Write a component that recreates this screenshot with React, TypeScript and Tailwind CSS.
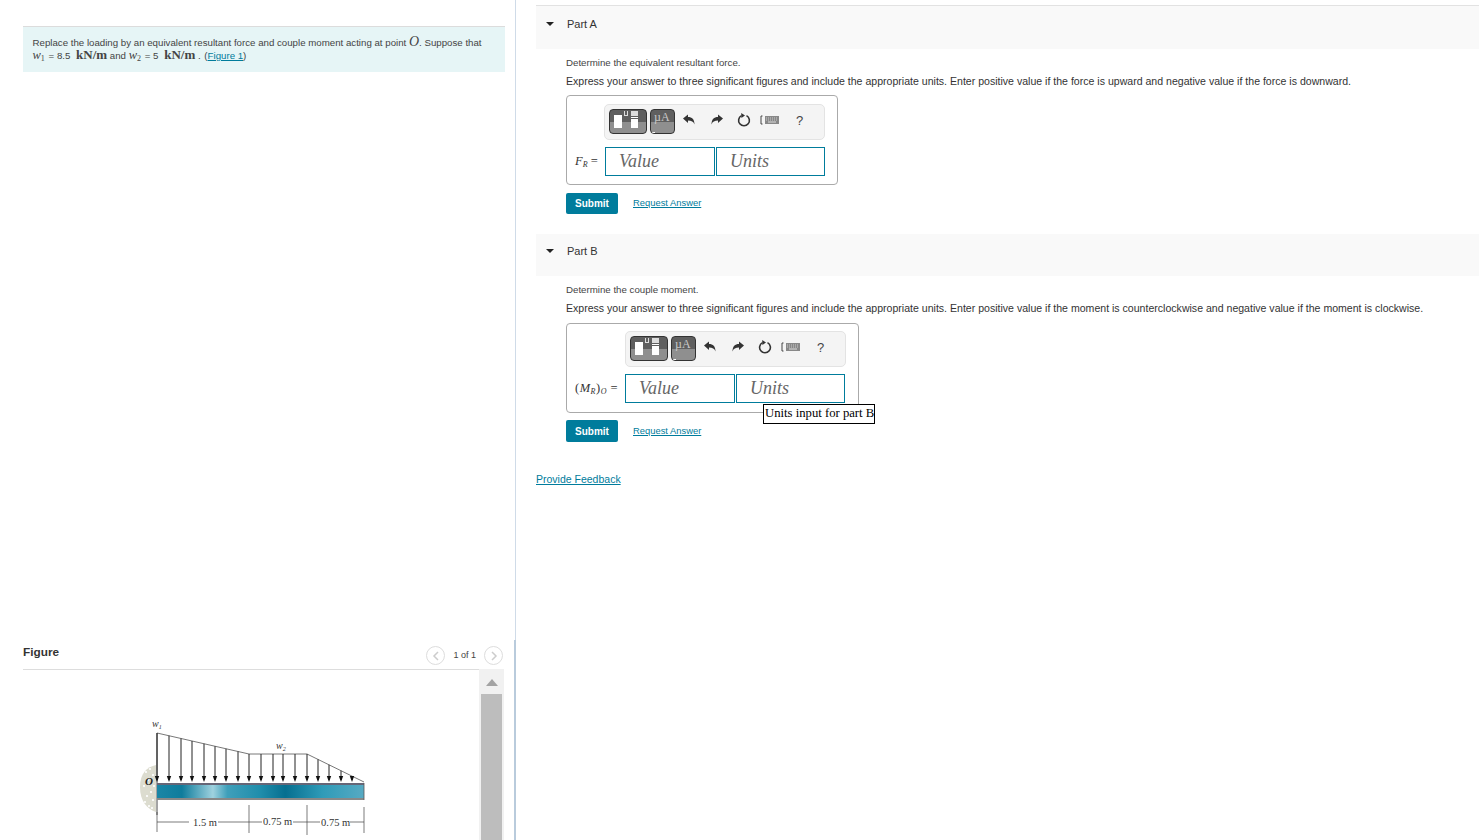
import type { ReactNode } from "react";

const serif = "font-['Liberation_Serif',serif]";

function PaletteButtons() {
  return (
    <div className="flex gap-[3px]">
      <div className="relative h-[25px] w-[38px] overflow-hidden rounded-[4px] border border-[#333] bg-[linear-gradient(#5f5f5f_0,#5f5f5f_50%,#8f8f8f_50%,#8f8f8f_100%)]">
        <div className="absolute left-[4px] top-[5px] h-[13px] w-[8px] bg-white" />
        <div className="absolute left-[14px] top-[1px] h-[5px] w-[4px] border border-t-0 border-[#ddd]" />
        <div className="absolute left-[21px] top-[1px] h-[5px] w-[7px] bg-[#ddd]" />
        <div className="absolute left-[21px] top-[7px] h-[1px] w-[7px] bg-white" />
        <div className="absolute left-[21px] top-[9px] h-[9px] w-[7px] bg-white" />
      </div>
      <div className="relative h-[25px] w-[25px] overflow-hidden rounded-[4px] border border-[#333] bg-[linear-gradient(#5f5f5f_0,#5f5f5f_50%,#8f8f8f_50%,#8f8f8f_100%)]">
        <span className={`absolute left-[3px] top-0 text-[12px] leading-[14px] text-[#c9c9c9] ${serif}`}>
          µA
        </span>
        <div className="absolute bottom-0 left-[1px] h-[1px] w-[3px] bg-white" />
      </div>
    </div>
  );
}

function ToolIcons() {
  return (
    <div className="ml-[7px] flex h-[22px] items-center text-[#333]">
      <svg width="14" height="14" viewBox="0 0 14 14" className="mr-[14px]">
        <path d="M1 5.5 6 1.5v2.6c4 0 6.5 2.4 6.5 7.4-1-3-3-4-6.5-4v2.4z" fill="#333" />
      </svg>
      <svg width="14" height="14" viewBox="0 0 14 14" className="mr-[12px]">
        <path d="M13 5.5 8 1.5v2.6c-4 0-6.5 2.4-6.5 7.4 1-3 3-4 6.5-4v2.4z" fill="#333" />
      </svg>
      <svg width="16" height="16" viewBox="0 0 16 16" className="mr-[8px]">
        <path d="M5.5 3.6a5.4 5.4 0 1 0 5 0" fill="none" stroke="#333" strokeWidth="1.6" />
        <path d="M8.6 1 8.8 6 5 3.4z" fill="#333" transform="rotate(180 7 3.5)" />
      </svg>
      <svg width="20" height="10" viewBox="0 0 20 10" className="mr-[16px]">
        <path d="M2.5 1H1v8h1.5" fill="none" stroke="#444" strokeWidth="1" />
        <rect x="5" y="1" width="14" height="8" fill="#888" />
        <path d="M6 3h12M6 5h12" stroke="#ddd" strokeWidth=".8" strokeDasharray="1 1" />
        <path d="M8 7h8" stroke="#ddd" strokeWidth="1" />
      </svg>
      <span className="text-[13px] leading-none text-[#444]">?</span>
    </div>
  );
}

function AnswerBox({ label, width, labelWidth, tall }: { label: ReactNode; width: string; labelWidth: string; tall?: boolean }) {
  return (
    <div className={`relative rounded-[4px] border border-[#aaa] pr-[12px] ${tall ? "pb-[9px] pt-[7px]" : "pb-[8px] pt-[8px]"} ${width}`}>
      <div className="flex justify-end">
        <div className="flex h-[36px] w-[221px] items-start rounded-[5px] border border-[#e3e3e3] bg-[#f4f4f4] pl-[4px] pt-[4px]">
          <PaletteButtons />
          <ToolIcons />
        </div>
      </div>
      <div className="mt-[7px] flex items-center">
        <div className={`pl-[8px] text-[12.5px] text-[#333] ${labelWidth} ${serif}`}>{label}</div>
        <div className="flex gap-[1px]">
          <div className={`flex h-[29px] w-[110px] items-center border border-[#007c9c] pl-[13px] text-[18px] italic text-[#666] ${serif}`}>
            Value
          </div>
          <div className={`flex h-[29px] w-[109px] items-center border border-[#007c9c] pl-[13px] text-[18px] italic text-[#666] ${serif}`}>
            Units
          </div>
        </div>
      </div>
      {tall && (
        <div className={`absolute left-[196px] top-[80px] whitespace-nowrap border border-black bg-white pb-[1px] pl-[1px] text-[12.7px] leading-[17px] text-black ${serif}`}>
          Units input for part B
        </div>
      )}
    </div>
  );
}

function Part(props: { name: string; question: string; hint: string; box: ReactNode; compact?: boolean }) {
  return (
    <section>
      <div className={`flex items-center bg-[#f9f9f9] pl-[10px] ${props.compact ? "h-[42px] pb-[8px]" : "h-[43px] pb-[7px]"}`}>
        <div className="h-0 w-0 border-x-[4.5px] border-t-[4px] border-x-transparent border-t-[#222]" />
        <span className="ml-[13px] text-[11px] text-[#333]">{props.name}</span>
      </div>
      <div className="pl-[30px]">
        <p className="mt-[8px] text-[9.7px] leading-[12px] text-[#444]">{props.question}</p>
        <p className="mt-[6px] whitespace-nowrap text-[10.57px] leading-[12px] text-[#333]">{props.hint}</p>
        <div className={props.compact ? "mt-[9px]" : "mt-[8px]"}>{props.box}</div>
        <div className={`flex items-center ${props.compact ? "mt-[7px]" : "mt-[8px]"}`}>
          <button className={`w-[52px] rounded-[2px] bg-[#007c9c] text-[10px] font-bold text-white ${props.compact ? "h-[22px]" : "h-[21px]"}`}>
            Submit
          </button>
          <a className="ml-[15px] text-[9.4px] text-[#007c9c] underline">Request Answer</a>
        </div>
      </div>
    </section>
  );
}

function BeamFigure() {
  const arrows = [157, 169, 181, 192, 204, 215, 226, 238, 249, 261, 273, 283, 295, 307, 318, 329, 341, 352];
  const speckles = [[146, 772], [150, 769], [153, 775], [148, 780], [144, 786], [151, 792], [147, 796], [153, 800], [145, 802], [149, 806], [154, 786], [152, 808]];
  const topAt = (x: number) => {
    if (x < 249) return 733 + ((x - 157) / 92) * 21;
    if (x < 307) return 754;
    return 754 + ((x - 307) / 57) * 28;
  };
  return (
    <svg width="260" height="130" viewBox="130 710 260 130" className="ml-[107px] mt-[40px] block">
      <defs>
        <linearGradient id="beam" x1="0" x2="1" y1="0" y2="0">
          <stop offset="0" stopColor="#1a86a6" />
          <stop offset=".12" stopColor="#0f7c9c" />
          <stop offset=".27" stopColor="#9fd2df" />
          <stop offset=".34" stopColor="#3f9fba" />
          <stop offset=".5" stopColor="#1f8dab" />
          <stop offset=".62" stopColor="#066f90" />
          <stop offset=".8" stopColor="#2f9bb8" />
          <stop offset="1" stopColor="#57aac3" />
        </linearGradient>
      </defs>
      <path d="M156 765c-9 2-16 8-16 22s7 22 16 25z" fill="#dcdccf" />
      {speckles.map(([x, y]) => (
        <circle key={`${x}-${y}`} cx={x} cy={y} r="1.1" fill="#fff" />
      ))}
      <path d="M157 733v82" stroke="#333" strokeWidth=".9" />
      <path d="M157 733 249 754H307L364 782" fill="none" stroke="#555" strokeWidth=".8" />
      {arrows.map((x) => (
        <g key={x}>
          <path d={`M${x} ${topAt(x)}V780`} stroke="#222" strokeWidth="1" />
          <path d={`M${x - 2.2} 776 ${x} 782 ${x + 2.2} 776z`} fill="#111" />
        </g>
      ))}
      <rect x="157" y="783" width="207" height="2" fill="#667" />
      <rect x="157" y="785" width="207" height="14" fill="url(#beam)" />
      <rect x="157" y="798" width="207" height="2" fill="#888" />
      <path d="M364 783v17" stroke="#555" strokeWidth=".8" />
      <text x="152" y="727" fontSize="10" fontStyle="italic" fontFamily="Liberation Serif" fill="#333">
        w<tspan fontSize="6" dy="2">1</tspan>
      </text>
      <text x="276" y="749" fontSize="10" fontStyle="italic" fontFamily="Liberation Serif" fill="#333">
        w<tspan fontSize="6" dy="2">2</tspan>
      </text>
      <text x="145" y="785" fontSize="11" fontWeight="bold" fontStyle="italic" fontFamily="Liberation Serif" fill="#222">O</text>
      <path d="M157 812v20M249 805v28M307 805v30M364 807v26M157 822h32M218 822h44M293 822h27M350 822h14" stroke="#444" strokeWidth=".7" fill="none" />
      <text x="193" y="826" fontSize="10.5" fontFamily="Liberation Serif" fill="#333">1.5 m</text>
      <text x="263" y="825" fontSize="10.5" fontFamily="Liberation Serif" fill="#333">0.75 m</text>
      <text x="321" y="826" fontSize="10.5" fontFamily="Liberation Serif" fill="#333">0.75 m</text>
    </svg>
  );
}

function PagerButton({ dir }: { dir: "<" | ">" }) {
  return (
    <div className="flex h-[19px] w-[19px] items-center justify-center rounded-full border border-[#ddd] bg-white">
      <svg width="8" height="10" viewBox="0 0 8 10">
        <path d={dir === "<" ? "M6 1 2 5l4 4" : "M2 1l4 4-4 4"} fill="none" stroke="#ccc" strokeWidth="1.5" />
      </svg>
    </div>
  );
}

function MathVar({ n }: { n: string }) {
  return (
    <span className={`mr-[1px] text-[12.5px] italic ${serif}`}>
      w<sub className="text-[8px] not-italic">{n}</sub>
    </span>
  );
}

export default function App() {
  return (
    <div className="flex h-[840px] w-[1479px] overflow-hidden bg-white font-['Liberation_Sans',sans-serif]">
      <aside className="relative flex h-full w-[516px] shrink-0 flex-col border-r border-[#cfdbe8] pl-[23px] pr-[11px] pt-[26px]">
        <div className="-mr-[1px] h-[46px] border-t border-[#dcdcdc] bg-[#e6f5f6] pl-[9.5px] pt-[9px] text-[9.7px] leading-[13px] text-[#444]">
          <p>
            Replace the loading by an equivalent resultant force and couple moment acting at point{" "}
            <span className={`text-[14px] italic leading-[10px] ${serif}`}>O</span>. Suppose that
          </p>
          <p className="-mt-[1px]">
            <MathVar n="1" /> = 8.5{" "}
            <span className={`ml-[3px] text-[13px] font-bold ${serif}`}>kN/m</span> and{" "}
            <MathVar n="2" /> = 5{" "}
            <span className={`ml-[3px] text-[13px] font-bold ${serif}`}>kN/m</span> .{" "}
            <span className="ml-[1px]">
              (<a className="text-[#007c9c] underline">Figure 1</a>)
            </span>
          </p>
        </div>

        <div className="mt-[569px] flex h-[29px] items-start justify-between border-b border-[#ddd]">
          <h2 className="pt-[4px] text-[11.8px] font-bold leading-[14px] text-[#333]">Figure</h2>
          <div className="flex items-center pr-[1px] pt-[5px]">
            <PagerButton dir="<" />
            <span className="mx-[8px] text-[9px] text-[#444]">1 of 1</span>
            <PagerButton dir=">" />
          </div>
        </div>

        <div className="relative flex-1">
          <BeamFigure />
          <div className="absolute -top-[1px] bottom-0 right-0 w-[25px] overflow-hidden bg-[#f1f1f1] px-[2px]">
            <div className="mx-auto mt-[10px] h-0 w-0 border-x-[6px] border-b-[7px] border-x-transparent border-b-[#a3a3a3]" />
            <div className="mt-[8px] h-full bg-[#bdbdbd]" />
          </div>
        </div>
        <div className="absolute -right-[1px] bottom-0 top-[640px] w-[2px] bg-[#b9cbdc]" />
      </aside>

      <main className="min-w-0 flex-1 pl-[20px] pt-[5px]">
        <div className="border-t border-[#e2e2e2]">
          <Part
            name="Part A"
            question="Determine the equivalent resultant force."
            hint="Express your answer to three significant figures and include the appropriate units. Enter positive value if the force is upward and negative value if the force is downward."
            box={
              <AnswerBox
                width="w-[272px]"
                labelWidth="w-[38px]"
                label={
                  <>
                    <i>F</i>
                    <sub className="text-[8px] italic">R</sub> =
                  </>
                }
              />
            }
          />
        </div>
        <div className="mt-[20px]">
          <Part
            compact
            name="Part B"
            question="Determine the couple moment."
            hint="Express your answer to three significant figures and include the appropriate units. Enter positive value if the moment is counterclockwise and negative value if the moment is clockwise."
            box={
              <AnswerBox
                tall
                width="w-[293px]"
                labelWidth="w-[58px] tracking-[0.5px]"
                label={
                  <>
                    (<i>M</i>
                    <sub className="text-[8px] italic">R</sub>)<sub className="text-[8px] italic">O</sub> =
                  </>
                }
              />
            }
          />
        </div>
        <a className="mt-[30px] block text-[10.5px] text-[#007c9c] underline">Provide Feedback</a>
      </main>
    </div>
  );
}
